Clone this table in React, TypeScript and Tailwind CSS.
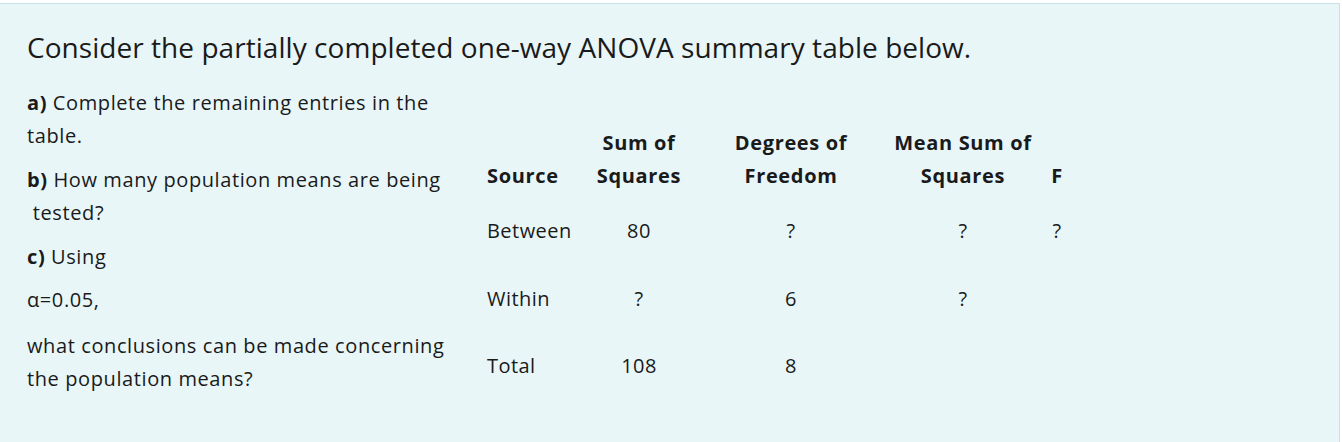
import React from "react";

const font = { fontFamily: '"Open Sans", "Noto Sans", sans-serif' };

export default function App() {
  return (
    <div className="w-[1342px] h-[442px] bg-white pt-[3px] overflow-hidden" style={font}>
      <div className="w-[1340px] h-[439px] border-t border-r border-[#c8e2e8] bg-[#e8f6f8] pl-[27px] text-[#1a1a1a]">
        <h1 className="pt-[25px] text-[28px] leading-[36px] font-normal tracking-[0.05px]">
          Consider the partially completed one-way ANOVA summary table below.
        </h1>
        <div className="flex">
          <div className="w-[460px] pt-[21px] text-[20px] leading-[33px] tracking-[0.6px]">
            <p>
              <b className="font-bold">a)</b> Complete the remaining entries in the
              <br />
              table.
            </p>
            <p className="mt-[11px]">
              <b className="font-bold">b)</b> How many population means are being
              <br />
              &nbsp;tested?
            </p>
            <p className="mt-[11px]">
              <b className="font-bold">c)</b> Using
            </p>
            <p className="mt-[10px]">α=0.05,</p>
            <p className="mt-[13px]">
              what conclusions can be made concerning
              <br />
              the population means?
            </p>
          </div>
          <div className="pt-[61px]">
            <div className="grid grid-cols-[100px_104px_200px_144px_44px] items-end text-[20px] leading-[33px] font-bold tracking-[0.65px]">
              <div>Source</div>
              <div className="text-center">
                Sum of
                <br />
                Squares
              </div>
              <div className="text-center">
                Degrees of
                <br />
                Freedom
              </div>
              <div className="text-center">
                Mean Sum of
                <br />
                Squares
              </div>
              <div className="text-center">F</div>
            </div>
            <div className="mt-[22px] text-[20px] leading-[33px] tracking-[0.45px]">
              {[
                ["Between", "80", "?", "?", "?"],
                ["Within", "?", "6", "?", ""],
                ["Total", "108", "8", "", ""],
              ].map((row, i) => (
                <div key={i} className="grid grid-cols-[100px_104px_200px_144px_44px] h-[67.5px]">
                  <div>{row[0]}</div>
                  <div className="text-center">{row[1]}</div>
                  <div className="text-center">{row[2]}</div>
                  <div className="text-center">{row[3]}</div>
                  <div className="text-center">{row[4]}</div>
                </div>
              ))}
            </div>
          </div>
        </div>
      </div>
    </div>
  );
}
